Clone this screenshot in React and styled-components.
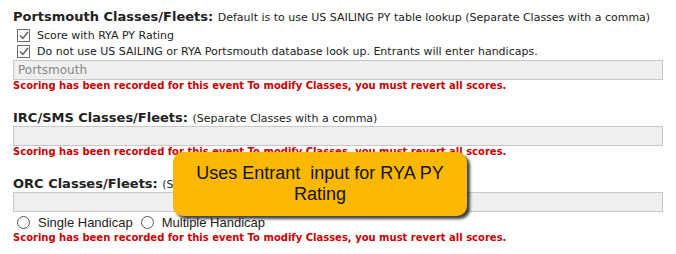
import React from 'react';
import styled, { createGlobalStyle } from 'styled-components';

const Global = createGlobalStyle`
  body {
    margin: 0;
    background: #fff;
  }
`;

const Root = styled.div`
  position: relative;
  width: 676px;
  height: 254px;
  padding: 9px 13px 0 13px;
  box-sizing: border-box;
  font-family: Verdana, "DejaVu Sans", sans-serif;
  color: #000;
  overflow: hidden;
`;

const Section = styled.div`
  margin-bottom: ${p => p.$gap || 0}px;
`;

const Title = styled.div`
  font-size: 13px;
  font-weight: bold;
  color: #222;
  line-height: 16px;
  height: 16px;
  margin-bottom: ${p => p.$bottom || 0}px;
  white-space: nowrap;
  span {
    font-weight: normal;
    font-size: 11px;
    color: #222;
  }
`;

const CheckRow = styled.label`
  display: flex;
  align-items: center;
  gap: 7px;
  height: 16px;
  padding-left: 4px;
  font-size: 11px;
  color: #222;
  white-space: nowrap;
`;

const Box = styled.span`
  width: 11px;
  height: 11px;
  border: 1px solid #707070;
  display: inline-flex;
  align-items: center;
  justify-content: center;
  background: #fff;
  flex: none;
`;

const Input = styled.div`
  box-sizing: border-box;
  width: 650px;
  height: 20px;
  margin-top: ${p => p.$top || 0}px;
  border: 1px solid #c8c8c8;
  background: #efefef;
  color: #888;
  font-size: 12px;
  line-height: 18px;
  padding-left: 4px;
`;

const Warning = styled.div`
  color: #cc0000;
  font-size: 10px;
  font-weight: bold;
  line-height: 12px;
  white-space: nowrap;
`;

const RadioRow = styled.div`
  display: flex;
  align-items: center;
  height: 20px;
  padding-left: 4px;
  font-family: "Liberation Sans", Arial, sans-serif;
  font-size: 13px;
  color: #222;
`;

const Radio = styled.span`
  width: 11px;
  height: 11px;
  border: 1px solid #555;
  border-radius: 50%;
  margin-right: 8px;
  flex: none;
`;

const RadioLabel = styled.span`
  margin-right: 8px;
`;

const Callout = styled.div`
  position: absolute;
  left: 173px;
  top: 152px;
  width: 294px;
  height: 64px;
  box-sizing: border-box;
  background: #fbb800;
  border-radius: 10px;
  box-shadow: 3px 3px 3px rgba(0, 0, 0, 0.75);
  display: flex;
  align-items: center;
  justify-content: center;
  text-align: center;
  font-family: "Liberation Sans", Arial, sans-serif;
  font-size: 18px;
  line-height: 21px;
  color: #111;
  white-space: pre-wrap;
  padding: 0 20px;
`;

const Check = () => (
  <Box>
    <svg width="10" height="9" viewBox="0 0 10 9">
      <path d="M1 4.5 L3.8 7.5 L9 1" fill="none" stroke="#555" strokeWidth="1.3" />
    </svg>
  </Box>
);

const WARN = 'Scoring has been recorded for this event To modify Classes, you must revert all scores.';

export default function App() {
  return (
    <>
      <Global />
      <Root>
        <Section $gap={18}>
          <Title $bottom={2}>
            Portsmouth Classes/Fleets: <span>Default is to use US SAILING PY table lookup (Separate Classes with a comma)</span>
          </Title>
          <CheckRow><Check />Score with RYA PY Rating</CheckRow>
          <CheckRow><Check />Do not use US SAILING or RYA Portsmouth database look up. Entrants will enter handicaps.</CheckRow>
          <Input $top={1}>Portsmouth</Input>
          <Warning>{WARN}</Warning>
        </Section>
        <Section $gap={18}>
          <Title>
            IRC/SMS Classes/Fleets: <span>(Separate Classes with a comma)</span>
          </Title>
          <Input>{''}</Input>
          <Warning>{WARN}</Warning>
        </Section>
        <Section>
          <Title>
            ORC Classes/Fleets: <span>(Separate Classes with a comma)</span>
          </Title>
          <Input>{''}</Input>
          <RadioRow>
            <Radio /><RadioLabel>Single Handicap</RadioLabel>
            <Radio /><RadioLabel>Multiple Handicap</RadioLabel>
          </RadioRow>
          <Warning>{WARN}</Warning>
        </Section>
        <Callout>{'Uses Entrant  input for RYA PY\nRating'}</Callout>
      </Root>
    </>
  );
}
